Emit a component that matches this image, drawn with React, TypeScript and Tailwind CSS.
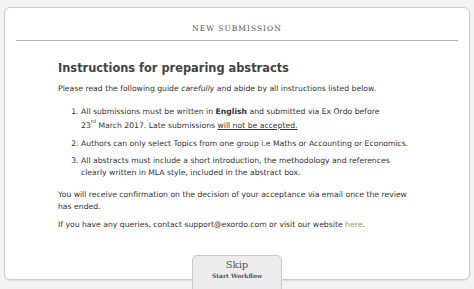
import React from 'react'

const sans = { fontFamily: '"DejaVu Sans", Verdana, sans-serif' }
const serif = { fontFamily: '"DejaVu Serif", Georgia, serif' }

export default function App() {
  return (
    <div className="relative w-[474px] h-[289px] overflow-hidden bg-[#f3f3f3] pt-[7px] px-[4px] text-[8px] leading-[12px]">
      <div className="h-[273px] rounded-[6px] border border-[#cdcdcd] bg-white shadow-[0_1px_1px_rgba(0,0,0,0.08)]">
        {/* Header */}
        <div
          className="mx-[11px] border-b border-[#b5b5b5] pt-[16px] pb-[6px] text-center text-[7.5px] leading-[10px] tracking-[1px] text-[#555]"
          style={serif}
        >
          NEW SUBMISSION
        </div>

        {/* Body */}
        <div className="pl-[53px] pr-[50px] text-[7.7px] leading-[12px] text-[#333]" style={sans}>
          <h1 className="mt-[20px] text-[11.4px] leading-[14px] font-bold text-[#444]">
            Instructions for preparing abstracts
          </h1>
          <p className="mt-[8px]">
            Please read the following guide <em>carefully</em> and abide by all instructions listed below.
          </p>

          <ol className="mt-[10px] pl-[23px] list-decimal flex flex-col gap-[5px]">
            <li className="leading-[14px]">
              All submissions must be written in <b>English</b> and submitted via Ex Ordo before
              <br />
              23<sup className="relative -top-[1px] text-[5px] leading-none align-super">rd</sup> March 2017. Late
              submissions <span className="underline">will not be accepted.</span>
            </li>
            <li>Authors can only select Topics from one group i.e Maths or Accounting or Economics.</li>
            <li>
              All abstracts must include a short introduction, the methodology and references
              <br />
              clearly written in MLA style, included in the abstract box.
            </li>
          </ol>

          <p className="mt-[10px] leading-[11.5px]">
            You will receive confirmation on the decision of your acceptance via email once the review
            <br />
            has ended.
          </p>
          <p className="mt-[7px]">
            If you have any queries, contact support@exordo.com or visit our website{' '}
            <span className="text-[#8da45a]">here</span>.
          </p>
        </div>
      </div>

      {/* Skip tab */}
      <div
        className="absolute left-[192px] top-[255px] w-[90px] h-[40px] rounded-t-[5px] border border-[#c9c9c9] bg-[#ececec] flex flex-col items-center pt-[2px] text-[#555]"
        style={serif}
      >
        <span className="text-[10px] leading-[13px]">Skip</span>
        <span className="text-[6px] leading-[10px] font-semibold">Start Workflow</span>
      </div>
    </div>
  )
}
